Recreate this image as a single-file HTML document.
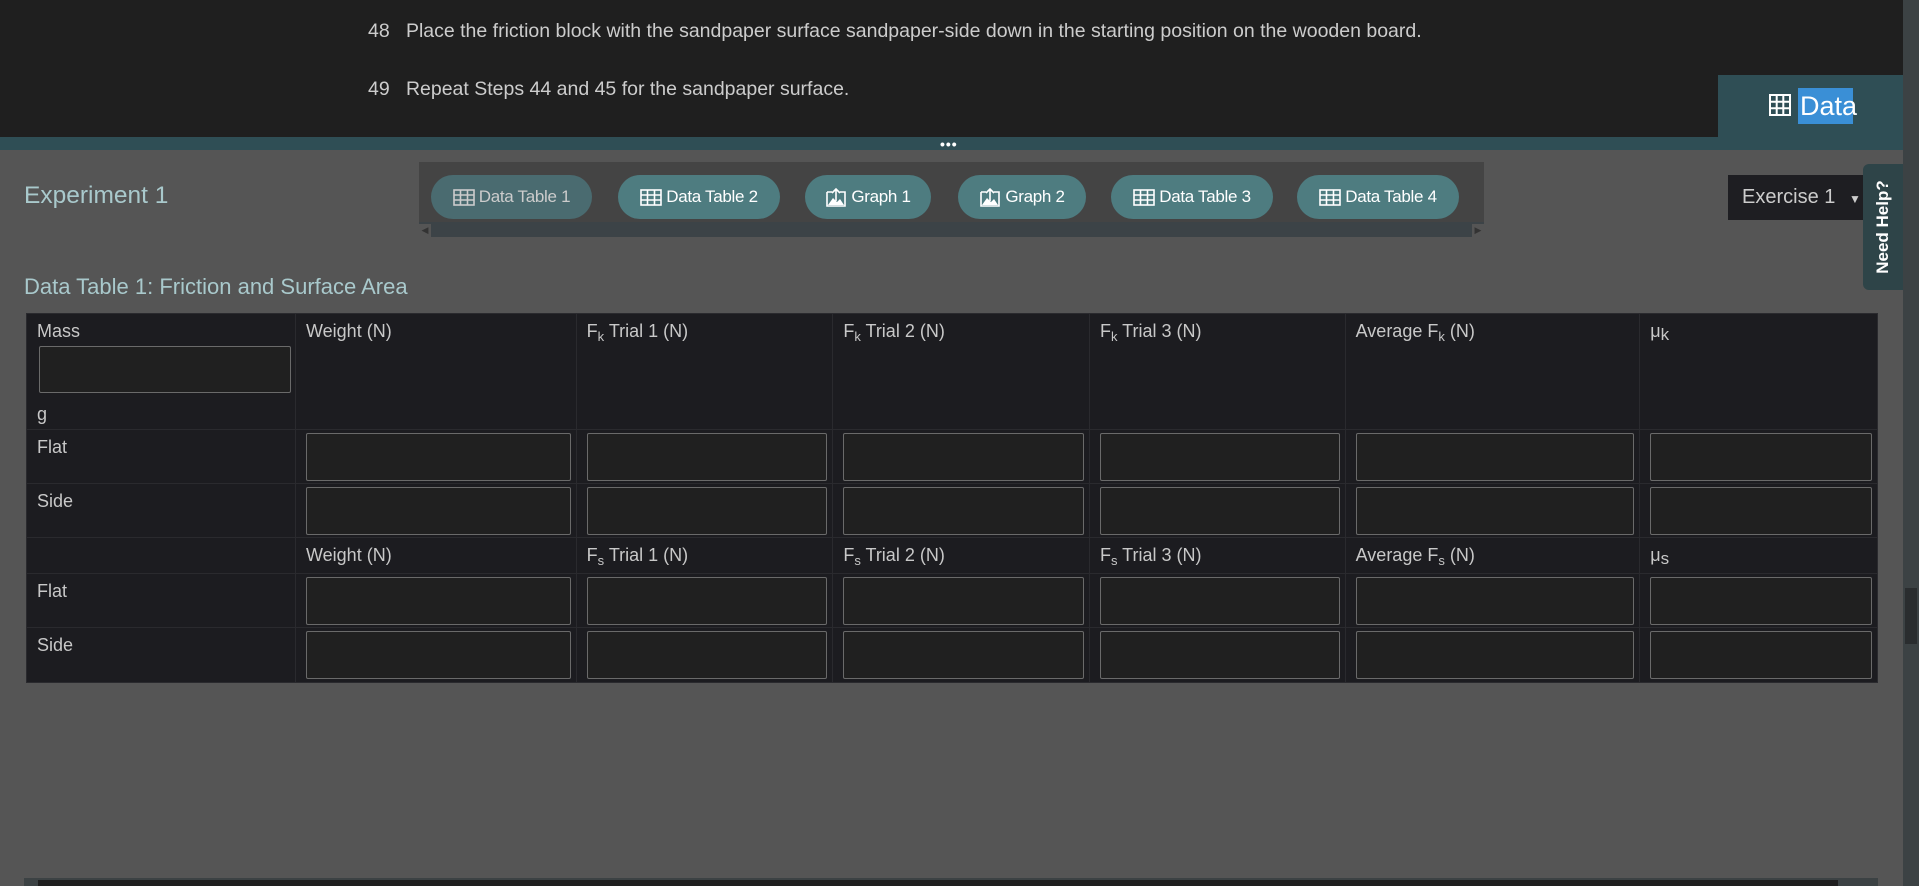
<!DOCTYPE html>
<html><head><meta charset="utf-8"><style>
*{box-sizing:border-box;margin:0;padding:0}
body{width:1919px;height:886px;overflow:hidden;background:#555;font-family:"Liberation Sans",sans-serif;position:relative}
.a{position:absolute}
.top{left:0;top:0;width:1903px;height:137px;background:#1f1f1f}
.step{color:#ccc;font-size:19.5px}
.bar{left:0;top:137px;width:1903px;height:13px;background:#2f4e55}
.pill{position:absolute;top:175px;height:44px;border-radius:22px;background:#4e7c80;color:#fff;font-size:17px;display:flex;align-items:center;justify-content:center;gap:4px;letter-spacing:-0.3px}
.ic{display:inline-block;width:22px;height:17px;vertical-align:middle}
table{position:absolute;left:26px;top:313px;width:1852px;border-collapse:collapse;background:#1c1c20;font-size:18px;color:#c8c8c8}
td{border:1px solid #2a2a2e;vertical-align:top;padding:0}
.inp{border:1px solid #6a6a6a;border-radius:2px;background:#202020;height:48px;margin:3px 5px 0 10px}
.lbl{padding:7px 10px 4px}
sub{font-size:13px;vertical-align:-4px}
</style></head><body>
<div class="a top"></div>
<div class="a step" style="left:368px;top:20px">48&nbsp;&nbsp;&nbsp;Place the friction block with the sandpaper surface sandpaper-side down in the starting position on the wooden board.</div>
<div class="a step" style="left:368px;top:78px">49&nbsp;&nbsp;&nbsp;Repeat Steps 44 and 45 for the sandpaper surface.</div>
<div class="a" style="left:1718px;top:75px;width:185px;height:62px;background:#2f4e55"></div>
<svg class="a" style="left:1769px;top:94px" width="22" height="22" viewBox="0 0 22 22"><g fill="none" stroke="#fff" stroke-width="2"><rect x="1" y="1" width="20" height="20"/><path d="M1 7.7H21M1 14.3H21M7.7 1V21M14.3 1V21"/></g></svg>
<div class="a" style="left:1798px;top:88px;width:55px;height:36px;background:#3a8fd6;color:#fff;font-size:27px;line-height:36px;padding-left:2px">Data</div>
<div class="a bar"></div>
<div class="a" style="left:940px;top:136px;color:#fff;font-size:14px;font-weight:bold;letter-spacing:1px">•••</div>
<div class="a" style="left:24px;top:182px;color:#a9c9cc;font-size:24.5px">Experiment 1</div>
<div class="a" style="left:419px;top:162px;width:1065px;height:75px;background:#444"></div>
<div class="a" style="left:419px;top:222px;width:1065px;height:15px;background:#3c4347"></div>
<div class="a" style="left:419px;top:224px;width:12px;height:13px;background:#555;color:#333;font-size:9px;line-height:13px;text-align:center">◀</div>
<div class="a" style="left:1472px;top:224px;width:12px;height:13px;background:#555;color:#333;font-size:9px;line-height:13px;text-align:center">▶</div>
<div class="pill" style="left:431px;width:161px;background:#4a6b70;color:#ccc"><svg class="ic" viewBox="0 0 22 17"><g fill="none" stroke="#ccc" stroke-width="1.6"><rect x="1" y="1" width="20" height="15"/><path d="M1 6H21M1 11H21M7.5 1V16M14.5 1V16"/></g></svg>Data Table 1</div>
<div class="pill" style="left:618px;width:162px"><svg class="ic" viewBox="0 0 22 17"><g fill="none" stroke="#fff" stroke-width="1.6"><rect x="1" y="1" width="20" height="15"/><path d="M1 6H21M1 11H21M7.5 1V16M14.5 1V16"/></g></svg>Data Table 2</div>
<div class="pill" style="left:805px;width:126px"><svg class="ic" viewBox="0 0 22 20" style="height:20px"><g fill="none" stroke="#fff" stroke-width="1.6"><path d="M2 5V19H20V5H15M7 5H2"/><path d="M11 14V2M7 6L11 2L15 6"/></g><path d="M3 18L8 11L12 15L15 12L19 18Z" fill="#fff"/></svg>Graph 1</div>
<div class="pill" style="left:958px;width:128px"><svg class="ic" viewBox="0 0 22 20" style="height:20px"><g fill="none" stroke="#fff" stroke-width="1.6"><path d="M2 5V19H20V5H15M7 5H2"/><path d="M11 14V2M7 6L11 2L15 6"/></g><path d="M3 18L8 11L12 15L15 12L19 18Z" fill="#fff"/></svg>Graph 2</div>
<div class="pill" style="left:1111px;width:162px"><svg class="ic" viewBox="0 0 22 17"><g fill="none" stroke="#fff" stroke-width="1.6"><rect x="1" y="1" width="20" height="15"/><path d="M1 6H21M1 11H21M7.5 1V16M14.5 1V16"/></g></svg>Data Table 3</div>
<div class="pill" style="left:1297px;width:162px"><svg class="ic" viewBox="0 0 22 17"><g fill="none" stroke="#fff" stroke-width="1.6"><rect x="1" y="1" width="20" height="15"/><path d="M1 6H21M1 11H21M7.5 1V16M14.5 1V16"/></g></svg>Data Table 4</div>
<div class="a" style="left:1728px;top:175px;width:140px;height:45px;background:#1e1e22;color:#ccc;font-size:20px;line-height:45px;padding-left:14px">Exercise 1 <span style="font-size:12px;margin-left:8px">▼</span></div>
<div class="a" style="left:1863px;top:164px;width:40px;height:126px;background:#2e4448;border-radius:6px 0 0 6px"></div>
<div class="a" style="left:1883px;top:227px;transform:translate(-50%,-50%) rotate(-90deg);color:#fff;font-weight:bold;font-size:17px;white-space:nowrap">Need Help?</div>
<div class="a" style="left:1903px;top:0;width:16px;height:886px;background:#3c4244"></div>
<div class="a" style="left:1905px;top:588px;width:12px;height:56px;background:#2a2d2f"></div>
<div class="a" style="left:24px;top:274px;color:#a9c9cc;font-size:22px">Data Table 1: Friction and Surface Area</div>
<table>
<colgroup><col style="width:268px"><col style="width:281px"><col style="width:257px"><col style="width:257px"><col style="width:256px"><col style="width:295px"><col style="width:238px"></colgroup>
<tr style="height:115px"><td><div class="lbl">Mass</div><div class="inp" style="margin:0 4px 0 12px;width:252px;height:47px"></div><div class="lbl" style="padding-top:11px">g</div></td><td><div class="lbl">Weight (N)</div></td><td><div class="lbl">F<sub>k</sub> Trial 1 (N)</div></td><td><div class="lbl">F<sub>k</sub> Trial 2 (N)</div></td><td><div class="lbl">F<sub>k</sub> Trial 3 (N)</div></td><td><div class="lbl">Average F<sub>k</sub> (N)</div></td><td><div class="lbl">μ<sub style="font-size:17px;vertical-align:-3px">k</sub></div></td></tr>
<tr style="height:54px"><td><div class="lbl">Flat</div></td><td><div class="inp"></div></td><td><div class="inp"></div></td><td><div class="inp"></div></td><td><div class="inp"></div></td><td><div class="inp"></div></td><td><div class="inp"></div></td></tr>
<tr style="height:54px"><td><div class="lbl">Side</div></td><td><div class="inp"></div></td><td><div class="inp"></div></td><td><div class="inp"></div></td><td><div class="inp"></div></td><td><div class="inp"></div></td><td><div class="inp"></div></td></tr>
<tr style="height:34px"><td></td><td><div class="lbl">Weight (N)</div></td><td><div class="lbl">F<sub>s</sub> Trial 1 (N)</div></td><td><div class="lbl">F<sub>s</sub> Trial 2 (N)</div></td><td><div class="lbl">F<sub>s</sub> Trial 3 (N)</div></td><td><div class="lbl">Average F<sub>s</sub> (N)</div></td><td><div class="lbl">μ<sub style="font-size:17px;vertical-align:-3px">s</sub></div></td></tr>
<tr style="height:54px"><td><div class="lbl">Flat</div></td><td><div class="inp"></div></td><td><div class="inp"></div></td><td><div class="inp"></div></td><td><div class="inp"></div></td><td><div class="inp"></div></td><td><div class="inp"></div></td></tr>
<tr style="height:55px"><td><div class="lbl">Side</div></td><td><div class="inp"></div></td><td><div class="inp"></div></td><td><div class="inp"></div></td><td><div class="inp"></div></td><td><div class="inp"></div></td><td><div class="inp"></div></td></tr>
</table>
<div class="a" style="left:24px;top:878px;width:1854px;height:8px;background:#3c4244"></div>
<div class="a" style="left:38px;top:880px;width:1800px;height:6px;background:#1f1f1f"></div>
</body></html>
